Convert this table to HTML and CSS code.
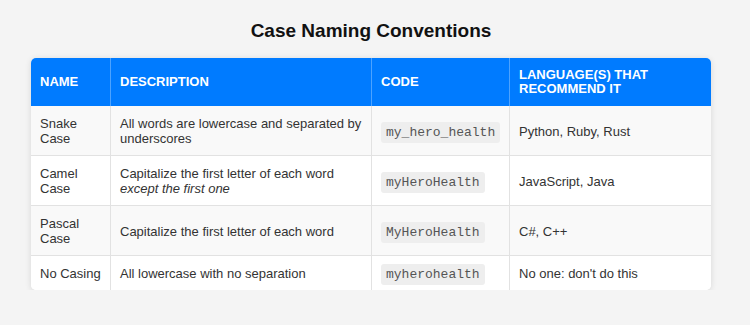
FILE: index.html
```html
<!DOCTYPE html>
<html>
<head>
<meta charset="utf-8">
<link rel="stylesheet" href="styles.css">
</head>
<body>
<div class="wrap">
  <h1 class="title">Case Naming Conventions</h1>
  <table class="conv">
    <thead>
      <tr>
        <th class="c-name">Name</th>
        <th class="c-desc">Description</th>
        <th class="c-code">Code</th>
        <th class="c-lang">Language(s) that recommend it</th>
      </tr>
    </thead>
    <tbody>
      <tr>
        <td>Snake Case</td>
        <td>All words are lowercase and separated by underscores</td>
        <td><code>my_hero_health</code></td>
        <td>Python, Ruby, Rust</td>
      </tr>
      <tr>
        <td>Camel Case</td>
        <td>Capitalize the first letter of each word<br><em>except the first one</em></td>
        <td><code>myHeroHealth</code></td>
        <td>JavaScript, Java</td>
      </tr>
      <tr>
        <td>Pascal Case</td>
        <td>Capitalize the first letter of each word</td>
        <td><code>MyHeroHealth</code></td>
        <td>C#, C++</td>
      </tr>
      <tr>
        <td>No Casing</td>
        <td>All lowercase with no separation</td>
        <td><code>myherohealth</code></td>
        <td>No one: don't do this</td>
      </tr>
    </tbody>
  </table>
</div>
</body>
</html>
```

FILE: styles.css
```css
html, body {
  margin: 0;
  padding: 0;
}
body {
  background: #f4f4f4;
  font-family: "Liberation Sans", Arial, sans-serif;
  color: #333;
  padding-right: 8px;
}
.wrap {
  width: 680px;
  margin: 0 auto;
  padding-top: 19px;
}
.title {
  margin: 0 0 16px;
  font-size: 19px;
  line-height: 23px;
  font-weight: bold;
  text-align: center;
  color: #111;
}
.conv {
  width: 680px;
  border-collapse: separate;
  border-spacing: 0;
  background: #fff;
  border-radius: 5px;
  overflow: hidden;
  box-shadow: 0 1px 6px rgba(0,0,0,0.12);
  table-layout: fixed;
}
.conv th,
.conv td {
  box-sizing: border-box;
}
.c-name { width: 79px; }
.c-desc { width: 261px; }
.c-code { width: 138px; }
.conv th {
  background: #007bff;
  color: #fff;
  font-size: 13px;
  line-height: 14px;
  font-weight: bold;
  text-transform: uppercase;
  text-align: left;
  padding: 10px 9px 10px 9px;
  border-left: 1px solid #4da3ff;
  vertical-align: middle;
}
.conv th:first-child,
.conv td:first-child {
  border-left: none;
}
.conv td {
  font-size: 13px;
  line-height: 15px;
  padding: 10px 9px 9px 9px;
  border-left: 1px solid #e2e2e2;
  border-top: 1px solid #e2e2e2;
  vertical-align: middle;
  background: #fff;
}
.conv tbody tr:first-child td {
  border-top: none;
}
.conv tbody tr:nth-child(odd) td {
  background: #f9f9f9;
}
.conv em {
  font-style: italic;
}
.conv code {
  font-family: "Liberation Mono", "Courier New", monospace;
  font-size: 13px;
  line-height: 13px;
  color: #555;
  background: #eee;
  border-radius: 3px;
  padding: 3px 5px;
}
```
